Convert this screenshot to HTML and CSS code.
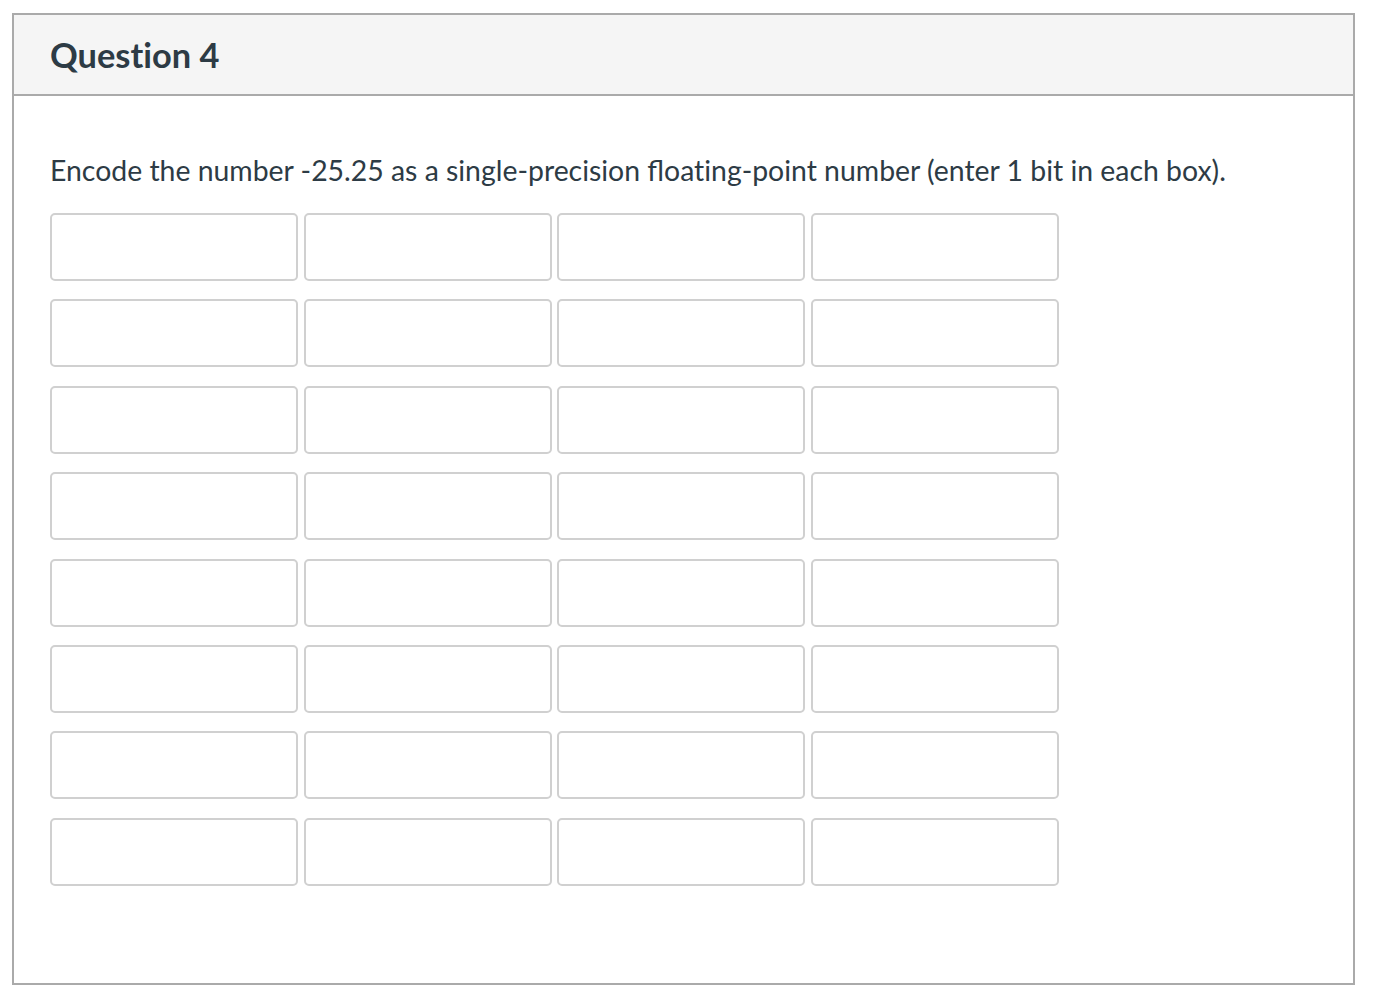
FILE: index.html
```html
<!DOCTYPE html>
<html lang="en">
<head>
<meta charset="utf-8">
<title>Question 4</title>
<link rel="stylesheet" href="styles.css">
</head>
<body>
<div class="question">
  <div class="question-header">
    <h2 class="question-title">Quest&zwnj;ion 4</h2>
  </div>
  <div class="question-body">
    <p class="question-text">Encode the number -25.25 as a single-precision floa&zwnj;t&zwnj;ing-point number (enter 1 bit in each box).</p>
    <div class="bit-grid">
      <input class="bit" type="text"><input class="bit" type="text"><input class="bit" type="text"><input class="bit" type="text">
      <input class="bit" type="text"><input class="bit" type="text"><input class="bit" type="text"><input class="bit" type="text">
      <input class="bit" type="text"><input class="bit" type="text"><input class="bit" type="text"><input class="bit" type="text">
      <input class="bit" type="text"><input class="bit" type="text"><input class="bit" type="text"><input class="bit" type="text">
      <input class="bit" type="text"><input class="bit" type="text"><input class="bit" type="text"><input class="bit" type="text">
      <input class="bit" type="text"><input class="bit" type="text"><input class="bit" type="text"><input class="bit" type="text">
      <input class="bit" type="text"><input class="bit" type="text"><input class="bit" type="text"><input class="bit" type="text">
      <input class="bit" type="text"><input class="bit" type="text"><input class="bit" type="text"><input class="bit" type="text">
    </div>
  </div>
</div>
</body>
</html>
```

FILE: styles.css
```css
html, body {
  margin: 0;
  padding: 0;
  background: #ffffff;
}

body {
  font-family: Lato, "Liberation Sans", sans-serif;
  color: #2d3b45;
}

.question {
  box-sizing: border-box;
  margin: 13px 0 0 12px;
  width: 1343px;
  height: 972px;
  border: 2px solid #aaaaaa;
  display: flex;
  flex-direction: column;
}

.question-header {
  box-sizing: border-box;
  height: 81px;
  background: #f5f5f5;
  border-bottom: 2px solid #aaaaaa;
  display: flex;
  align-items: center;
  padding-left: 36px;
}

.question-title {
  margin: 0;
  font-size: 34.4px;
  font-weight: 700;
  line-height: 40px;
  color: #2d3b45;
}

.question-body {
  padding: 56px 36px 0 36px;
}

.question-text {
  margin: 0 0 24px 0;
  font-size: 28.4px;
  line-height: 37px;
}

.bit-grid {
  display: grid;
  grid-template-columns: repeat(4, 248px);
  grid-auto-rows: 68px;
  column-gap: 5.7px;
  row-gap: 18.4px;
}

.bit {
  box-sizing: border-box;
  width: 100%;
  height: 100%;
  margin: 0;
  padding: 0 10px;
  border: 2px solid #d0d0d0;
  border-radius: 5px;
  background: #ffffff;
  font-family: Lato, "Liberation Sans", sans-serif;
  font-size: 24px;
  color: #2d3b45;
  outline: none;
}
```
